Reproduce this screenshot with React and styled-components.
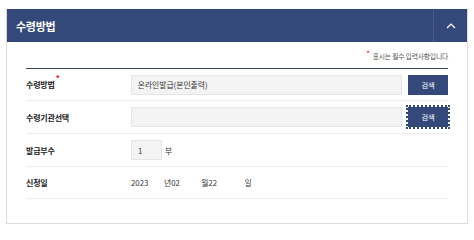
import React from 'react';
import styled, { createGlobalStyle } from 'styled-components';

const GlobalStyle = createGlobalStyle`
  body { margin: 0; background: #fff; font-family: "Noto Sans CJK KR", "Noto Sans", sans-serif; color: #222; }
  * { box-sizing: border-box; }
`;

const Panel = styled.section`
  width: 462px; margin: 9px 0 0 6px; border: 1px solid #dcdcdc; border-top: 0; background: #fff;
`;
const Header = styled.div`
  height: 33px; background: #34497a; display: flex; align-items: center; justify-content: space-between;
`;
const Title = styled.h2`
  margin: 0 0 0 9px; font-size: 11px; font-weight: 700; color: #fff; letter-spacing: -0.3px;
`;
const Toggle = styled.button`
  width: 34px; height: 33px; border: 0; border-left: 1px solid #4a5e8c; background: transparent;
  display: flex; align-items: center; justify-content: center; padding: 0; cursor: pointer;
`;
const Body = styled.div`
  padding: 0 19px 24px 19px;
`;
const Note = styled.p`
  margin: 0; height: 26px; display: flex; align-items: center; justify-content: flex-end;
  font-size: 6.8px; color: #555; letter-spacing: -0.2px; padding-top: 1px;
`;
const Star = styled.span`
  color: #d0021b; font-size: 8px; margin-right: 3px; position: relative; top: -2px;
`;
const Table = styled.div`
  border-top: 1px solid #3b4863;
`;
const Row = styled.div`
  height: ${p => p.$h || 33}px; display: flex; align-items: center; border-bottom: 1px solid #ececec;
`;
const Label = styled.div`
  width: 105px; font-size: 8px; font-weight: 700; color: #222; position: relative; letter-spacing: -0.2px;
`;
const Req = styled.span`
  position: absolute; top: -7px; margin-left: 1px; color: #d0021b; font-size: 8px;
`;
const Field = styled.div`
  width: ${p => p.$w}px; height: 20px; background: #f3f3f3; border: 1px solid #e6e6e6;
  font-size: 7.8px; color: #333; display: flex; align-items: center; padding-left: 6px;
`;
const SearchButton = styled.button`
  width: 40px; height: 20px; margin-left: 6px; background: #34497a; color: #fff; border: 0;
  font-family: inherit; font-size: 7.2px; padding: 0; cursor: pointer;
  outline: ${p => (p.$focus ? '2px dotted #34497a' : 'none')}; outline-offset: 0;
`;
const Unit = styled.span`
  font-size: 7.8px; color: #333; margin-left: ${p => p.$ml || 0}px;
`;
const DateValue = styled.span`
  width: ${p => p.$w}px; font-size: 7.8px; color: #333;
`;

function Chevron() {
  return (
    <svg width="10" height="6" viewBox="0 0 10 6">
      <polyline points="1,5 5,1 9,5" fill="none" stroke="#fff" strokeWidth="1.2" />
    </svg>
  );
}

export default function App() {
  return (
    <>
      <GlobalStyle />
      <Panel>
        <Header>
          <Title>수령방법</Title>
          <Toggle aria-label="접기"><Chevron /></Toggle>
        </Header>
        <Body>
          <Note><Star>*</Star>표시는 필수 입력사항입니다</Note>
          <Table>
            <Row $h={32}>
              <Label>수령방법<Req>*</Req></Label>
              <Field $w={272}>온라인발급(본인출력)</Field>
              <SearchButton>검색</SearchButton>
            </Row>
            <Row>
              <Label>수령기관선택</Label>
              <Field $w={272}></Field>
              <SearchButton $focus>검색</SearchButton>
            </Row>
            <Row>
              <Label>발급부수</Label>
              <Field $w={31}>1</Field>
              <Unit $ml={3}>부</Unit>
            </Row>
            <Row $h={32}>
              <Label>신청일</Label>
              <DateValue $w={33}>2023</DateValue>
              <Unit>년</Unit>
              <DateValue $w={30}>02</DateValue>
              <Unit>월</Unit>
              <DateValue $w={36}>22</DateValue>
              <Unit>일</Unit>
            </Row>
          </Table>
        </Body>
      </Panel>
    </>
  );
}
